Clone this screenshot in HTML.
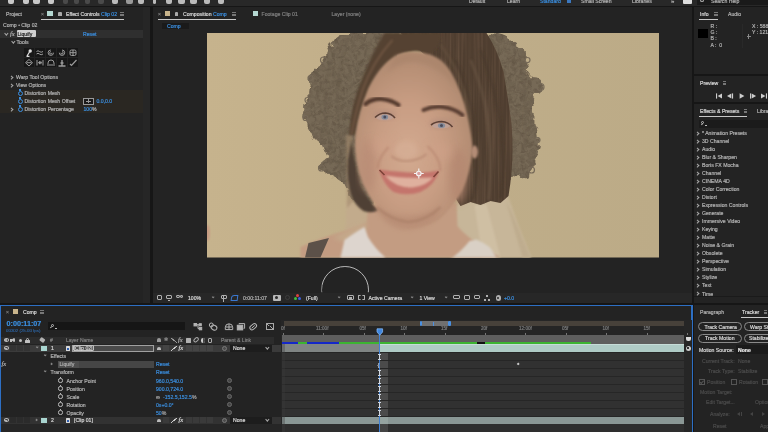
<!DOCTYPE html>
<html><head><meta charset="utf-8"><title>After Effects</title>
<style>
*{margin:0;padding:0;box-sizing:border-box}
html,body{width:768px;height:432px;overflow:hidden;background:#161616}
body{position:relative;font-family:"Liberation Sans",sans-serif;font-size:5.15px;color:#b4b4b4;-webkit-text-stroke:.18px currentColor;line-height:8px}
.a{position:absolute}
.t{position:absolute;white-space:nowrap;line-height:8px;height:8px}
.b{color:#3b8fe0}
.w{color:#dadada}
.d{color:#777}
.d2{color:#808080}
#r{position:absolute;left:0;top:0;width:768px;height:432px;will-change:transform}
</style></head><body><div id="r">
<div class="a" style="left:0px;top:0px;width:768px;height:5.5px;background:#282828;"></div>
<div class="a" style="left:8px;top:0px;width:6px;height:3.5px;background:#c8c8c8;border-radius:0 0 2px 2px;filter:blur(.5px)"></div>
<div class="a" style="left:23px;top:0px;width:6px;height:3.5px;background:#c8c8c8;border-radius:0 0 2px 2px;filter:blur(.5px)"></div>
<div class="a" style="left:33px;top:0px;width:7px;height:3.5px;background:#c8c8c8;border-radius:0 0 2px 2px;filter:blur(.5px)"></div>
<div class="a" style="left:48px;top:0px;width:6px;height:3.5px;background:#c8c8c8;border-radius:0 0 2px 2px;filter:blur(.5px)"></div>
<div class="a" style="left:63px;top:0px;width:5px;height:3.5px;background:#4a4a4a;border-radius:0 0 2px 2px;filter:blur(.5px)"></div>
<div class="a" style="left:74px;top:0px;width:5px;height:3.5px;background:#4a4a4a;border-radius:0 0 2px 2px;filter:blur(.5px)"></div>
<div class="a" style="left:85px;top:0px;width:5px;height:3.5px;background:#4a4a4a;border-radius:0 0 2px 2px;filter:blur(.5px)"></div>
<div class="a" style="left:98px;top:0px;width:6px;height:3.5px;background:#4a4a4a;border-radius:0 0 2px 2px;filter:blur(.5px)"></div>
<div class="a" style="left:112px;top:0px;width:6px;height:3.5px;background:#bbb;border-radius:0 0 2px 2px;filter:blur(.5px)"></div>
<div class="a" style="left:126px;top:0px;width:7px;height:3.5px;background:#999;border-radius:0 0 2px 2px;filter:blur(.5px)"></div>
<div class="a" style="left:138px;top:0px;width:6px;height:3.5px;background:#bbb;border-radius:0 0 2px 2px;filter:blur(.5px)"></div>
<div class="a" style="left:153px;top:0px;width:3px;height:3.5px;background:#bbb;border-radius:0 0 2px 2px;filter:blur(.5px)"></div>
<div class="a" style="left:166px;top:0px;width:6px;height:3.5px;background:#bbb;border-radius:0 0 2px 2px;filter:blur(.5px)"></div>
<div class="a" style="left:178px;top:0px;width:7px;height:3.5px;background:#bbb;border-radius:0 0 2px 2px;filter:blur(.5px)"></div>
<div class="a" style="left:190px;top:0px;width:7px;height:3.5px;background:#bbb;border-radius:0 0 2px 2px;filter:blur(.5px)"></div>
<div class="a" style="left:204px;top:0px;width:6px;height:3.5px;background:#bbb;border-radius:0 0 2px 2px;filter:blur(.5px)"></div>
<div class="a" style="left:218px;top:0px;width:6px;height:3.5px;background:#bbb;border-radius:0 0 2px 2px;filter:blur(.5px)"></div>
<div class="t " style="left:469px;top:-3px;font-size:5.15px;">Default</div>
<div class="t " style="left:507px;top:-3px;font-size:5.15px;">Learn</div>
<div class="t b" style="left:540px;top:-3px;font-size:5.15px;">Standard</div>
<div class="t " style="left:581px;top:-3px;font-size:5.15px;">Small Screen</div>
<div class="t " style="left:632px;top:-3px;font-size:5.15px;">Libraries</div>
<div class="a" style="left:567px;top:0px;width:4px;height:3px;background:#3b78c0;"></div>
<div class="t " style="left:671px;top:-3.5px;font-size:6px;">»</div>
<div class="a" style="left:683px;top:0px;width:9px;height:3.5px;background:#ddd;border-radius:0 0 1px 1px"></div>
<div class="a" style="left:697px;top:0px;width:71px;height:4.5px;background:#1a1a1a;"></div>
<div class="t " style="left:711px;top:-3px;font-size:5.15px;">Search Help</div>
<div class="a" style="left:700px;top:0px;width:4px;height:3px;background:transparent;border:1px solid #aaa;border-radius:50%;top:-1px"></div>
<div class="a" style="left:0px;top:7px;width:150px;height:296px;background:#232323;"></div>
<div class="t " style="left:6px;top:10px;">Project</div>
<div class="t d" style="left:41px;top:10px;font-size:5px;">×</div>
<div class="a" style="left:47px;top:11px;width:6px;height:5px;background:#b5d8d2;"></div>
<div class="a" style="left:58px;top:12px;width:3.5px;height:4px;background:#aaa;border-radius:1px 1px 0 0"></div>
<div class="t " style="left:66px;top:10px;font-size:5.15px;"><span class="w">Effect Controls</span> <span class="b">Clip 02</span></div>
<div class="a" style="left:120px;top:12.0px;width:3.5px;height:0.8px;background:#777;"></div>
<div class="a" style="left:120px;top:13.5px;width:3.5px;height:0.8px;background:#777;"></div>
<div class="a" style="left:120px;top:15.0px;width:3.5px;height:0.8px;background:#777;"></div>
<div class="a" style="left:41px;top:18.7px;width:83px;height:1px;background:#c8c8c8;"></div>
<div class="t " style="left:3px;top:21px;">Comp • Clip 02</div>
<div class="a" style="left:0px;top:30px;width:143px;height:7.5px;background:#2f2f2f;"></div>
<div class="a" style="left:4.65px;top:31.705px;width:2.7px;height:2.7px;border-right:1px solid #a8a8a8;border-bottom:1px solid #a8a8a8;transform:rotate(45deg)"></div>
<div class="t " style="left:10px;top:30px;font-size:6.5px;"><i style="font-family:'Liberation Serif',serif">fx</i></div>
<div class="a" style="left:16.5px;top:30.3px;width:19.5px;height:7px;background:#d0d0d0;border-radius:1px"></div>
<div class="t " style="left:17.5px;top:30px;font-size:5.15px;color:#1a1a1a">Liquify</div>
<div class="t b" style="left:83px;top:30px;">Reset</div>
<div class="a" style="left:12.15px;top:39.705px;width:2.7px;height:2.7px;border-right:1px solid #a8a8a8;border-bottom:1px solid #a8a8a8;transform:rotate(45deg)"></div>
<div class="t " style="left:16.5px;top:38px;">Tools</div>
<div class="a" style="left:24px;top:47.5px;width:10px;height:9.5px;background:#171717;"></div>
<svg class="a" style="left:24px;top:47.5px;filter:blur(.25px)" width="10" height="9.5" viewBox="0 0 10 9.5" fill="none" stroke="#e0e0e0" stroke-width="1"><circle cx="6.2" cy="3" r="1.7" fill="#ddd" stroke="none"/><path d="M5.5 4 L3 8 M2.5 8.3 H5.5" stroke="#ddd" stroke-width="1.3"/></svg>
<div class="a" style="left:35px;top:47.5px;width:10px;height:9.5px;background:#171717;"></div>
<svg class="a" style="left:35px;top:47.5px;filter:blur(.25px)" width="10" height="9.5" viewBox="0 0 10 9.5" fill="none" stroke="#9c9c9c" stroke-width="1"><path d="M1.5 3.5 Q3 2 4.5 3.5 T8 3.5 M1.5 6 Q3 4.5 4.5 6 T8 6"/></svg>
<div class="a" style="left:46px;top:47.5px;width:10px;height:9.5px;background:#171717;"></div>
<svg class="a" style="left:46px;top:47.5px;filter:blur(.25px)" width="10" height="9.5" viewBox="0 0 10 9.5" fill="none" stroke="#9c9c9c" stroke-width="1"><path d="M7.5 4.7 A2.7 2.7 0 1 1 4.8 2 M4.8 3.6 A1.2 1.2 0 1 0 6 4.8"/></svg>
<div class="a" style="left:57px;top:47.5px;width:10px;height:9.5px;background:#171717;"></div>
<svg class="a" style="left:57px;top:47.5px;filter:blur(.25px)" width="10" height="9.5" viewBox="0 0 10 9.5" fill="none" stroke="#9c9c9c" stroke-width="1"><path d="M2.3 4.7 A2.7 2.7 0 1 0 5 2 M5 3.6 A1.2 1.2 0 1 1 3.8 4.8"/></svg>
<div class="a" style="left:68px;top:47.5px;width:10px;height:9.5px;background:#171717;"></div>
<svg class="a" style="left:68px;top:47.5px;filter:blur(.25px)" width="10" height="9.5" viewBox="0 0 10 9.5" fill="none" stroke="#9c9c9c" stroke-width="1"><rect x="2" y="2" width="6" height="5.5" rx="1.5"/><path d="M5 2 V7.5 M2 4.7 H8"/></svg>
<div class="a" style="left:24px;top:57.5px;width:10px;height:9.5px;background:#171717;"></div>
<svg class="a" style="left:24px;top:57.5px;filter:blur(.25px)" width="10" height="9.5" viewBox="0 0 10 9.5" fill="none" stroke="#9c9c9c" stroke-width="1"><path d="M5 1.5 L8.5 4.7 L5 8 L1.5 4.7 Z M2.5 4.7 H7.5"/></svg>
<div class="a" style="left:35px;top:57.5px;width:10px;height:9.5px;background:#171717;"></div>
<svg class="a" style="left:35px;top:57.5px;filter:blur(.25px)" width="10" height="9.5" viewBox="0 0 10 9.5" fill="none" stroke="#9c9c9c" stroke-width="1"><path d="M2 2 V7.5 M8 2 V7.5 M3 4.7 H7 M4.5 3.2 V6.2 M5.8 3.2 V6.2"/></svg>
<div class="a" style="left:46px;top:57.5px;width:10px;height:9.5px;background:#171717;"></div>
<svg class="a" style="left:46px;top:57.5px;filter:blur(.25px)" width="10" height="9.5" viewBox="0 0 10 9.5" fill="none" stroke="#9c9c9c" stroke-width="1"><path d="M2 8 V5 A3 3 0 0 1 8 5 V8 M4 8 V6 M6 8 V6"/></svg>
<div class="a" style="left:57px;top:57.5px;width:10px;height:9.5px;background:#171717;"></div>
<svg class="a" style="left:57px;top:57.5px;filter:blur(.25px)" width="10" height="9.5" viewBox="0 0 10 9.5" fill="none" stroke="#9c9c9c" stroke-width="1"><path d="M1.5 8 H8.5 M5 7.5 V5 M3.5 5 H6.5 M5 4.5 V2" stroke-width="1.4"/></svg>
<div class="a" style="left:68px;top:57.5px;width:10px;height:9.5px;background:#171717;"></div>
<svg class="a" style="left:68px;top:57.5px;filter:blur(.25px)" width="10" height="9.5" viewBox="0 0 10 9.5" fill="none" stroke="#9c9c9c" stroke-width="1"><path d="M2 6 L3.5 7.5 L8.5 2" stroke-width="1.2"/></svg>
<div class="a" style="left:10.205px;top:75.65px;width:2.7px;height:2.7px;border-right:1px solid #a8a8a8;border-top:1px solid #a8a8a8;transform:rotate(45deg)"></div>
<div class="t " style="left:16px;top:73px;">Warp Tool Options</div>
<div class="a" style="left:10.205px;top:83.65px;width:2.7px;height:2.7px;border-right:1px solid #a8a8a8;border-top:1px solid #a8a8a8;transform:rotate(45deg)"></div>
<div class="t " style="left:16px;top:81px;">View Options</div>
<div class="a" style="left:0px;top:89.5px;width:143px;height:23.5px;background:#2a2722;"></div>
<div class="a" style="left:17.5px;top:90.60000000000001px;width:5px;height:5px;border-radius:50%;border:1px solid #3b8fe0"></div>
<div class="a" style="left:19.3px;top:89.4px;width:1.5px;height:1.2px;background:#3b8fe0;"></div>
<div class="t " style="left:24.5px;top:89.2px;">Distortion Mesh</div>
<div class="a" style="left:17.5px;top:98.60000000000001px;width:5px;height:5px;border-radius:50%;border:1px solid #3b8fe0"></div>
<div class="a" style="left:19.3px;top:97.4px;width:1.5px;height:1.2px;background:#3b8fe0;"></div>
<div class="t " style="left:24.5px;top:97.2px;">Distortion Mesh Offset</div>
<div class="a" style="left:17.5px;top:106.60000000000001px;width:5px;height:5px;border-radius:50%;border:1px solid #3b8fe0"></div>
<div class="a" style="left:19.3px;top:105.4px;width:1.5px;height:1.2px;background:#3b8fe0;"></div>
<div class="t " style="left:24.5px;top:105.2px;">Distortion Percentage</div>
<div class="a" style="left:10.205px;top:107.85000000000001px;width:2.7px;height:2.7px;border-right:1px solid #a8a8a8;border-top:1px solid #a8a8a8;transform:rotate(45deg)"></div>
<div class="a" style="left:83px;top:97.5px;width:10.5px;height:7px;background:#1a1a1a;border:1px solid #999"></div>
<div class="a" style="left:86px;top:100.7px;width:4.5px;height:0.7px;background:#999;"></div>
<div class="a" style="left:87.9px;top:99px;width:0.7px;height:4px;background:#999;"></div>
<div class="t b" style="left:96.5px;top:97.2px;">0.0,0.0</div>
<div class="t " style="left:83.5px;top:105.2px;"><span class="b">100</span>%</div>
<div class="a" style="left:143px;top:7px;width:7px;height:296px;background:#262626;"></div>
<div class="a" style="left:153px;top:7px;width:539px;height:296px;background:#232323;"></div>
<div class="a" style="left:153px;top:292.5px;width:539px;height:10.5px;background:#272727;"></div>
<div class="t d" style="left:158px;top:10px;font-size:5px;">×</div>
<div class="a" style="left:165px;top:11.2px;width:5px;height:4.8px;background:#c9b58c;"></div>
<div class="a" style="left:174.5px;top:12px;width:3.5px;height:4px;background:#aaa;border-radius:1px 1px 0 0"></div>
<div class="t " style="left:183px;top:10px;font-size:5.15px;"><span class="w">Composition</span> <span class="b">Comp</span></div>
<div class="a" style="left:232px;top:12.0px;width:3.5px;height:0.8px;background:#777;"></div>
<div class="a" style="left:232px;top:13.5px;width:3.5px;height:0.8px;background:#777;"></div>
<div class="a" style="left:232px;top:15.0px;width:3.5px;height:0.8px;background:#777;"></div>
<div class="a" style="left:157.5px;top:19px;width:78px;height:1px;background:#c8c8c8;"></div>
<div class="a" style="left:252.5px;top:11.2px;width:5px;height:4.8px;background:#b5d8d2;"></div>
<div class="t d2" style="left:261.5px;top:10px;">Footage Clip 01</div>
<div class="t d2" style="left:331.5px;top:10px;">Layer (none)</div>
<div class="a" style="left:162px;top:22.5px;width:27px;height:6.5px;background:#1a1a1a;"></div>
<div class="t b" style="left:167px;top:21.8px;">Comp</div>
<svg class="a" style="left:206.5px;top:33px" width="452.3" height="224.5" viewBox="206.5 33 452.3 224.5">
<defs>
<filter id="b05" x="-20%" y="-20%" width="140%" height="140%"><feGaussianBlur stdDeviation="0.6"/></filter>
<filter id="b1" x="-20%" y="-20%" width="140%" height="140%"><feGaussianBlur stdDeviation="1.1"/></filter>
<filter id="b2" x="-20%" y="-20%" width="140%" height="140%"><feGaussianBlur stdDeviation="2.2"/></filter>
<filter id="b4" x="-30%" y="-30%" width="160%" height="160%"><feGaussianBlur stdDeviation="4.5"/></filter>
<filter id="b8" x="-40%" y="-40%" width="180%" height="180%"><feGaussianBlur stdDeviation="9"/></filter>
<filter id="curl" color-interpolation-filters="sRGB" x="-10%" y="-10%" width="120%" height="120%"><feTurbulence type="fractalNoise" baseFrequency="0.13" numOctaves="2" seed="3" result="n"/><feDisplacementMap in="SourceGraphic" in2="n" scale="9" xChannelSelector="R" yChannelSelector="G"/><feGaussianBlur stdDeviation="0.55"/></filter>
<filter id="strand" color-interpolation-filters="sRGB" x="-5%" y="-5%" width="110%" height="110%"><feTurbulence type="fractalNoise" baseFrequency="0.45 0.012" numOctaves="2" seed="5" result="n"/><feColorMatrix in="n" type="matrix" values="0 0 0 0 0.43  0 0 0 0 0.34  0 0 0 0 0.27  1.3 0 0 0 -0.5" result="lt"/><feComposite in="lt" in2="SourceGraphic" operator="in" result="l2"/><feMerge><feMergeNode in="SourceGraphic"/><feMergeNode in="l2"/></feMerge><feGaussianBlur stdDeviation="0.7"/></filter>
<filter id="mott" color-interpolation-filters="sRGB" x="-5%" y="-5%" width="110%" height="110%"><feTurbulence type="fractalNoise" baseFrequency="0.25" numOctaves="2" seed="8" result="n"/><feColorMatrix in="n" type="matrix" values="0 0 0 0 0.35  0 0 0 0 0.3  0 0 0 0 0.24  1.3 0 0 0 -0.47" result="dk"/><feComposite in="dk" in2="SourceGraphic" operator="in" result="d2"/><feMerge><feMergeNode in="SourceGraphic"/><feMergeNode in="d2"/></feMerge></filter>
<linearGradient id="bg" x1="0" x2="1" y1="0" y2="0"><stop offset="0" stop-color="#c6b38d"/><stop offset="0.3" stop-color="#c2af8a"/><stop offset="0.6" stop-color="#bfad89"/><stop offset="1" stop-color="#bcab87"/></linearGradient>
<radialGradient id="skin" cx="0.46" cy="0.58" r="0.58"><stop offset="0" stop-color="#d3aa90"/><stop offset="0.5" stop-color="#c89d83"/><stop offset="1" stop-color="#b08a70"/></radialGradient>
</defs>
<rect x="206.5" y="33" width="452.3" height="224.5" fill="url(#bg)"/>
<!-- curly hair ghost -->
<g filter="url(#curl)"><g filter="url(#mott)" fill="#766956">
<path d="M339 33 Q333 40 329 47 Q325 52 326 56 Q321 57 322 62 Q324 66 319 66 Q314 69 311 73 Q307 78 311 82 Q308 90 309 96 Q303 103 305 110 Q302 117 306 122 Q305 129 311 132 Q313 140 321 144 Q324 152 327 158 Q316 164 319 170 Q324 176 331 176 Q338 179 343 183 Q347 192 351 198 Q355 206 362 210 L372 206 L380 150 L400 33 Z"/>
<path d="M485 33 Q498 34 506 38 Q513 41 517 46 Q524 50 526 56 Q529 62 524 68 Q527 74 531 78 Q540 78 543 85 Q542 92 536 94 Q531 97 533 104 Q531 112 534 118 Q533 126 537 132 Q540 142 537 150 Q536 158 532 164 Q534 172 528 176 Q522 179 518 175 Q512 176 508 182 L500 190 L490 120 Z"/>
</g></g>
<!-- curl details -->
<g fill="none" stroke="#776a58" stroke-width="1.2" filter="url(#b05)">
<circle cx="323" cy="60" r="3"/><circle cx="310" cy="78" r="2.5"/><circle cx="305" cy="118" r="2.5"/><circle cx="321" cy="168" r="3"/><circle cx="540" cy="87" r="3.5"/><circle cx="527" cy="60" r="2.5"/><circle cx="531" cy="170" r="3"/><circle cx="537" cy="140" r="2.5"/><circle cx="307" cy="100" r="2.5"/>
</g>
<g filter="url(#b1)" stroke="#665a4a" stroke-width="2" fill="none" opacity=".5">
<path d="M330 60 Q322 90 326 125 Q330 150 340 170"/><path d="M345 45 Q333 80 338 120"/><path d="M520 60 Q528 100 524 150"/>
</g>
<!-- translucent strands right -->
<path filter="url(#b1)" d="M456 203 L506 192 Q517 225 531 257.5 L450 257.5 Z" fill="#c7b699"/>
<path filter="url(#b1)" d="M474 205 L486 204 L500 257.5 L482 257.5 Z" fill="#d3c3a8" opacity=".7"/>
<path filter="url(#b1)" d="M505 200 L511 212 L530 257.5 L522 257.5 Z" fill="#bba98a" opacity=".7"/>
<!-- translucent strands left -->
<path filter="url(#b1)" d="M346 200 L372 205 L372 226 L345 236 Z" fill="#c2ab8c"/>
<path filter="url(#b1)" d="M345.5 135 L352 135 L354 200 L346.5 208 Z" fill="#a48b6e" opacity=".6"/>
<!-- shoulders / skin -->
<path filter="url(#b1)" d="M300 257.5 L300 247 Q320 238 347 230 Q358 226 366 222 L368 205 L456 203 L457 226 Q468 240 500 257.5 Z" fill="#c39c82"/>
<path filter="url(#b2)" d="M332 238 L366 220 L366 230 L344 242 Z" fill="#c4ab8c" opacity=".8"/>
<!-- white top -->
<path filter="url(#b1)" d="M340 257.5 L344 240 Q355 232 364 227 L367.5 237 Q374 248 385 257.5 Z" fill="#ddd5ce"/>
<path filter="url(#b1)" d="M452 257.5 Q462 250 469 241 L476 239.5 Q484 243 489 247 Q493 252 496 257.5 Z" fill="#d9d0c5"/>
<path filter="url(#b05)" d="M304.5 257.5 L308 243 L328.5 238 L320 257.5 Z" fill="#5b5149"/>
<!-- dark hair left lower -->
<path filter="url(#b1)" d="M351 140 Q354 165 360 185 Q368 202 378 210 Q372 214 363 211 Q355 206 351 196 Q346 180 347.5 160 Z" fill="#4f4134"/>
<!-- straight hair right -->
<path filter="url(#strand)" d="M400 33 L486 33 Q497 50 503 72 Q508 100 511 125 Q514 160 508 196 L500 203 L490 201 L480 205 L470 202 L460 206 L455 198 Q462 170 462 140 Q460 90 430 60 Z" fill="#4f3e30"/>
<g filter="url(#b1)" fill="none" opacity=".55">
<path d="M470 60 Q488 100 490 150 Q491 180 488 200" stroke="#6a5644" stroke-width="3"/>
<path d="M480 50 Q500 100 502 150 Q503 180 500 198" stroke="#47382c" stroke-width="3"/>
<path d="M455 60 Q474 100 476 150 Q477 180 472 200" stroke="#47382c" stroke-width="3"/>
<path d="M440 45 Q468 80 470 140" stroke="#66523f" stroke-width="2.5"/>
</g>
<!-- hair top & left band -->
<path filter="url(#b1)" d="M384 33 L440 33 Q440 50 428 54 Q418 50 410 52 Q396 54 388 62 Q372 80 363 104 Q357 122 355 135 L348.5 135 Q350 105 362 78 Q372 52 384 33 Z" fill="#554232"/>
<path filter="url(#b1)" d="M392 40 Q372 62 362 90 Q354 115 351 135" stroke="#86664f" stroke-width="2.5" fill="none" opacity=".45"/>
<!-- face -->
<path filter="url(#b1)" d="M412 52 Q438 52 450 72 Q462 92 467 116 Q472 140 472 150 Q470 172 462 190 Q452 208 438 220 Q424 228 408 228 Q392 226 379 211 Q366 196 358.5 172 Q353 150 355 135 Q358 112 368 88 Q380 64 395 56 Q403 52 412 52 Z" fill="url(#skin)"/>
<!-- neck under chin shadow -->
<path filter="url(#b2)" d="M374 206 Q403 226 440 207 Q436 228 405 230 Q384 228 374 206 Z" fill="#b98e76" opacity=".8"/>
<ellipse filter="url(#b1)" cx="474" cy="152" rx="3.5" ry="6.5" fill="#b38c76"/>
<!-- forehead shade near hair -->
<path filter="url(#b2)" d="M395 56 Q412 50 440 60 Q452 72 458 90 Q440 66 415 62 Q398 62 385 74 Z" fill="#a8836b" opacity=".6"/>
<path filter="url(#b1)" d="M376 207 Q392 221 408 222 Q426 221 440 207" stroke="#a67b64" stroke-width="2.5" fill="none" opacity=".55"/>
<!-- cheek shading -->
<ellipse filter="url(#b4)" cx="368" cy="165" rx="8" ry="26" fill="#b88a74" opacity=".7"/>
<ellipse filter="url(#b4)" cx="458" cy="175" rx="9" ry="28" fill="#b48670" opacity=".75"/>
<ellipse filter="url(#b4)" cx="383" cy="146" rx="12" ry="9" fill="#cfa088" opacity=".5"/>
<ellipse filter="url(#b4)" cx="440" cy="152" rx="12" ry="9" fill="#cfa088" opacity=".5"/>
<!-- brows -->
<path filter="url(#b1)" d="M365 104 Q372 98.5 381 99 Q391 100 398 105" stroke="#553a2d" stroke-width="4.2" fill="none" stroke-linecap="round"/>
<path filter="url(#b1)" d="M423 110 Q432 106 442 107 Q454 108.5 462 115" stroke="#593d30" stroke-width="4" fill="none" stroke-linecap="round"/>
<!-- eyes -->
<ellipse filter="url(#b2)" cx="384" cy="115" rx="12" ry="5" fill="#b58e7c" opacity=".7"/>
<ellipse filter="url(#b2)" cx="441" cy="123.5" rx="12" ry="5" fill="#b58e7c" opacity=".7"/>
<ellipse filter="url(#b05)" cx="384" cy="117.3" rx="8.5" ry="3" fill="#bfa094"/>
<ellipse filter="url(#b05)" cx="384.3" cy="117" rx="3.4" ry="2.6" fill="#868c9a"/>
<ellipse filter="url(#b05)" cx="384.3" cy="117" rx="1.5" ry="1.5" fill="#4a4c5c"/>
<path filter="url(#b05)" d="M374.5 117.5 Q379 113 385 113 Q391 113.5 394.5 118" stroke="#5c4036" stroke-width="1.6" fill="none"/>
<ellipse filter="url(#b05)" cx="440.5" cy="125.8" rx="9" ry="2.8" fill="#bfa094"/>
<ellipse filter="url(#b05)" cx="441" cy="125.5" rx="3.6" ry="2.5" fill="#868c9a"/>
<ellipse filter="url(#b05)" cx="441" cy="125.5" rx="1.5" ry="1.5" fill="#4a4c5c"/>
<path filter="url(#b05)" d="M430.5 125 Q435 121.5 441 121.5 Q448 122 452 127" stroke="#5c4036" stroke-width="1.6" fill="none"/>
<!-- nose -->
<ellipse filter="url(#b2)" cx="405.5" cy="150" rx="11" ry="9" fill="#d5ae95" opacity=".8"/>
<path filter="url(#b1)" d="M391 156 Q396 161 406 161 Q418 161 426 154" stroke="#b5866f" stroke-width="1.8" fill="none" opacity=".7"/>
<!-- smile lines -->
<path filter="url(#b1)" d="M388 147 Q378 158 377 168" stroke="#b78670" stroke-width="2" fill="none" opacity=".7"/>
<path filter="url(#b1)" d="M427 146 Q440 158 440 171" stroke="#b78670" stroke-width="2" fill="none" opacity=".7"/>
<!-- mouth -->
<path filter="url(#b1)" d="M378.5 169.5 Q390 171 403 172 Q420 174 438.5 170.5 Q435 185 420 192 Q406 196.5 393 192 Q383 185 378.5 169.5 Z" fill="#c4746c"/>
<path filter="url(#b1)" d="M384.5 175.5 Q405 179 432.5 177.5 Q426 186 412 187.5 Q395 188 384.5 175.5 Z" fill="#dfb09e"/>
<path filter="url(#b05)" d="M379 170 L384 175 M438 171.5 L433 177" stroke="#7d4238" stroke-width="1.6" fill="none"/>
<!-- crosshair -->
<g filter="url(#b05)"><circle cx="418.3" cy="173.5" r="2.3" fill="#d9a0a0" stroke="#f4f4f4" stroke-width="1.1"/><path d="M418.3 168.6 V171 M418.3 176 V178.6 M413.5 173.5 H416 M420.6 173.5 H423.2" stroke="#f4f4f4" stroke-width="1.1"/></g>
<!-- left hand hint -->
<ellipse filter="url(#b1)" cx="207" cy="233" rx="2.2" ry="8" fill="#c79a82"/>
</svg>

<div class="a" style="left:321.4px;top:265.8px;width:47.8px;height:47.8px;border-radius:50%;border:1px solid #b8b8b8;clip-path:inset(0 0 21.4px 0)"></div>
<div class="a" style="left:156.5px;top:294.5px;width:5.5px;height:5.5px;background:transparent;border:1px solid #b0b0b0;border-radius:1px;"></div>
<div class="a" style="left:166px;top:294.5px;width:6px;height:4.5px;background:transparent;border:1px solid #b0b0b0;border-radius:1px;"></div>
<div class="a" style="left:168px;top:299.5px;width:2px;height:1px;background:#b0b0b0;"></div>
<div class="a" style="left:176px;top:294.5px;width:3.8px;height:3.5px;background:transparent;border:1px solid #b0b0b0;border-radius:1px;border-radius:40%"></div>
<div class="a" style="left:179.5px;top:294.5px;width:3.8px;height:3.5px;background:transparent;border:1px solid #b0b0b0;border-radius:1px;border-radius:40%"></div>
<div class="t w" style="left:188px;top:294px;font-size:5.15px;">100%</div>
<div class="a" style="left:212.35px;top:296.045px;width:2.3px;height:2.3px;border-right:0.9px solid #858585;border-bottom:0.9px solid #858585;transform:rotate(45deg)"></div>
<div class="a" style="left:220.5px;top:294.5px;width:6px;height:4.5px;background:transparent;border:1px solid #b0b0b0;border-radius:1px;"></div>
<div class="a" style="left:223px;top:294.5px;width:0.8px;height:7px;background:#b0b0b0;"></div>
<div class="a" style="left:230.5px;top:294.5px;width:6.5px;height:5.5px;background:transparent;border:1px solid #3b78d0;border-radius:1px;border-radius:3px 0 0 0;transform:skewX(-8deg)"></div>
<div class="t " style="left:243px;top:294px;font-size:5.15px;">0:00:11:07</div>
<div class="a" style="left:273px;top:295px;width:7.5px;height:5.5px;background:#b8b8b8;border-radius:1px"></div>
<div class="a" style="left:275.3px;top:296.3px;width:3px;height:3px;background:#272727;border-radius:50%"></div>
<div class="a" style="left:284.5px;top:294.5px;width:5.5px;height:5.5px;background:transparent;border:1px solid #3c3c3c;border-radius:1px;border-radius:50%"></div>
<div class="a" style="left:296px;top:294px;width:3.2px;height:3.2px;background:#e04040;border-radius:50%"></div>
<div class="a" style="left:294.3px;top:297px;width:3.2px;height:3.2px;background:#40c040;border-radius:50%"></div>
<div class="a" style="left:297.7px;top:297px;width:3.2px;height:3.2px;background:#4060e0;border-radius:50%"></div>
<div class="t w" style="left:306px;top:294px;font-size:5.15px;">(Full)</div>
<div class="a" style="left:338.35px;top:296.045px;width:2.3px;height:2.3px;border-right:0.9px solid #858585;border-bottom:0.9px solid #858585;transform:rotate(45deg)"></div>
<div class="a" style="left:347px;top:294.5px;width:7px;height:5px;background:transparent;border:1px solid #b0b0b0;border-radius:1px;"></div>
<div class="a" style="left:349px;top:296.5px;width:3px;height:2px;background:#b0b0b0;"></div>
<div class="a" style="left:358px;top:294.5px;width:7px;height:5px;background:transparent;border:1px solid #b0b0b0;border-radius:1px;border-style:dashed"></div>
<div class="t w" style="left:368.5px;top:294px;font-size:5.15px;">Active Camera</div>
<div class="a" style="left:410.85px;top:296.045px;width:2.3px;height:2.3px;border-right:0.9px solid #858585;border-bottom:0.9px solid #858585;transform:rotate(45deg)"></div>
<div class="t w" style="left:419.5px;top:294px;font-size:5.15px;">1 View</div>
<div class="a" style="left:445.35px;top:296.045px;width:2.3px;height:2.3px;border-right:0.9px solid #858585;border-bottom:0.9px solid #858585;transform:rotate(45deg)"></div>
<div class="a" style="left:453px;top:294.5px;width:6.5px;height:4.5px;background:transparent;border:1px solid #b0b0b0;border-radius:1px;"></div>
<div class="a" style="left:463.5px;top:294.5px;width:6px;height:5px;background:transparent;border:1px solid #b0b0b0;border-radius:1px;"></div>
<div class="a" style="left:474px;top:294.5px;width:6px;height:4.5px;background:transparent;border:1px solid #b0b0b0;border-radius:1px;"></div>
<div class="a" style="left:485.5px;top:294.5px;width:2.5px;height:2.5px;background:#b0b0b0;"></div>
<div class="a" style="left:483.5px;top:298.5px;width:2.5px;height:2.5px;background:#b0b0b0;"></div>
<div class="a" style="left:487.5px;top:298.5px;width:2.5px;height:2.5px;background:#b0b0b0;"></div>
<div class="a" style="left:495.5px;top:295px;width:5.5px;height:5.5px;background:#b0b0b0;border-radius:50%"></div>
<div class="a" style="left:497.3px;top:296.8px;width:2px;height:2px;background:#272727;border-radius:50%"></div>
<div class="t b" style="left:504px;top:294px;font-size:5.15px;">+0.0</div>
<div class="a" style="left:694px;top:7px;width:74px;height:67px;background:#232323;"></div>
<div class="t w" style="left:700px;top:10px;font-size:5.15px;">Info</div>
<div class="a" style="left:714px;top:12.0px;width:3.5px;height:0.8px;background:#777;"></div>
<div class="a" style="left:714px;top:13.5px;width:3.5px;height:0.8px;background:#777;"></div>
<div class="a" style="left:714px;top:15.0px;width:3.5px;height:0.8px;background:#777;"></div>
<div class="a" style="left:699px;top:19px;width:18.5px;height:1px;background:#c8c8c8;"></div>
<div class="t " style="left:728px;top:10px;font-size:5.15px;">Audio</div>
<div class="a" style="left:698px;top:29px;width:9.5px;height:9px;background:#000;"></div>
<div class="t " style="left:710.5px;top:22px;font-size:5.15px;">R :</div>
<div class="t " style="left:710.5px;top:28px;font-size:5.15px;">G :</div>
<div class="t " style="left:710.5px;top:34.3px;font-size:5.15px;">B :</div>
<div class="t " style="left:710.5px;top:40.7px;font-size:5.15px;">A :&nbsp; 0</div>
<div class="t " style="left:752px;top:22px;font-size:5.15px;">X : 588</div>
<div class="t " style="left:752px;top:28px;font-size:5.15px;">Y : 121</div>
<div class="a" style="left:746.5px;top:36.2px;width:4.5px;height:0.7px;background:#888;"></div>
<div class="a" style="left:748.4px;top:34.3px;width:0.7px;height:4.5px;background:#888;"></div>
<div class="a" style="left:742px;top:24px;width:0.6px;height:24px;background:#292929;"></div>
<div class="a" style="left:694px;top:76px;width:74px;height:26px;background:#232323;"></div>
<div class="t w" style="left:700px;top:79px;font-size:5.15px;">Preview</div>
<div class="a" style="left:722.5px;top:81.0px;width:3.5px;height:0.8px;background:#777;"></div>
<div class="a" style="left:722.5px;top:82.5px;width:3.5px;height:0.8px;background:#777;"></div>
<div class="a" style="left:722.5px;top:84.0px;width:3.5px;height:0.8px;background:#777;"></div>
<svg class="a" style="left:714px;top:92px" width="54" height="8" viewBox="714 92 54 8" fill="#cdcdcd"><rect x="716" y="93.4" width="1.1" height="5.2"/><path d="M722 93.4 V98.6 L717.6 96 Z"/><path d="M731.4 93.4 V98.6 L727 96 Z"/><rect x="732" y="93.4" width="1.1" height="5.2"/><path d="M739.6 93.2 V98.8 L744.4 96 Z"/><rect x="750" y="93.4" width="1.1" height="5.2"/><path d="M751.7 93.4 V98.6 L756.1 96 Z"/><path d="M761 93.4 V98.6 L765.4 96 Z"/><rect x="765.9" y="93.4" width="1.1" height="5.2"/></svg>
<div class="a" style="left:694px;top:104px;width:74px;height:199px;background:#232323;"></div>
<div class="t w" style="left:700px;top:107px;font-size:5.15px;">Effects &amp; Presets</div>
<div class="a" style="left:743.5px;top:109.0px;width:3.5px;height:0.8px;background:#777;"></div>
<div class="a" style="left:743.5px;top:110.5px;width:3.5px;height:0.8px;background:#777;"></div>
<div class="a" style="left:743.5px;top:112.0px;width:3.5px;height:0.8px;background:#777;"></div>
<div class="a" style="left:699px;top:116.2px;width:48px;height:1px;background:#c8c8c8;"></div>
<div class="t " style="left:757px;top:107px;font-size:5.15px;">Libraries</div>
<div class="a" style="left:699px;top:119.5px;width:69px;height:8px;background:#1b1b1b;"></div>
<div class="a" style="left:701px;top:121px;width:3px;height:3px;background:transparent;border:.8px solid #bbb;border-radius:50%"></div>
<div class="a" style="left:700.5px;top:124.3px;width:1.5px;height:0.8px;background:#bbb;transform:rotate(-45deg)"></div>
<div class="a" style="left:705px;top:125px;width:1.5px;height:0.7px;background:#bbb;"></div>
<div class="a" style="left:696.0049999999999px;top:131.95000000000002px;width:2.7px;height:2.7px;border-right:1px solid #a8a8a8;border-top:1px solid #a8a8a8;transform:rotate(45deg)"></div>
<div class="t " style="left:702px;top:129.3px;font-size:5.15px;">* Animation Presets</div>
<div class="a" style="left:696.0049999999999px;top:139.96px;width:2.7px;height:2.7px;border-right:1px solid #a8a8a8;border-top:1px solid #a8a8a8;transform:rotate(45deg)"></div>
<div class="t " style="left:702px;top:137.31px;font-size:5.15px;">3D Channel</div>
<div class="a" style="left:696.0049999999999px;top:147.97000000000003px;width:2.7px;height:2.7px;border-right:1px solid #a8a8a8;border-top:1px solid #a8a8a8;transform:rotate(45deg)"></div>
<div class="t " style="left:702px;top:145.32000000000002px;font-size:5.15px;">Audio</div>
<div class="a" style="left:696.0049999999999px;top:155.98000000000002px;width:2.7px;height:2.7px;border-right:1px solid #a8a8a8;border-top:1px solid #a8a8a8;transform:rotate(45deg)"></div>
<div class="t " style="left:702px;top:153.33px;font-size:5.15px;">Blur &amp; Sharpen</div>
<div class="a" style="left:696.0049999999999px;top:163.99px;width:2.7px;height:2.7px;border-right:1px solid #a8a8a8;border-top:1px solid #a8a8a8;transform:rotate(45deg)"></div>
<div class="t " style="left:702px;top:161.34px;font-size:5.15px;">Boris FX Mocha</div>
<div class="a" style="left:696.0049999999999px;top:172.00000000000003px;width:2.7px;height:2.7px;border-right:1px solid #a8a8a8;border-top:1px solid #a8a8a8;transform:rotate(45deg)"></div>
<div class="t " style="left:702px;top:169.35000000000002px;font-size:5.15px;">Channel</div>
<div class="a" style="left:696.0049999999999px;top:180.01000000000002px;width:2.7px;height:2.7px;border-right:1px solid #a8a8a8;border-top:1px solid #a8a8a8;transform:rotate(45deg)"></div>
<div class="t " style="left:702px;top:177.36px;font-size:5.15px;">CINEMA 4D</div>
<div class="a" style="left:696.0049999999999px;top:188.02px;width:2.7px;height:2.7px;border-right:1px solid #a8a8a8;border-top:1px solid #a8a8a8;transform:rotate(45deg)"></div>
<div class="t " style="left:702px;top:185.37px;font-size:5.15px;">Color Correction</div>
<div class="a" style="left:696.0049999999999px;top:196.03px;width:2.7px;height:2.7px;border-right:1px solid #a8a8a8;border-top:1px solid #a8a8a8;transform:rotate(45deg)"></div>
<div class="t " style="left:702px;top:193.38px;font-size:5.15px;">Distort</div>
<div class="a" style="left:696.0049999999999px;top:204.04000000000002px;width:2.7px;height:2.7px;border-right:1px solid #a8a8a8;border-top:1px solid #a8a8a8;transform:rotate(45deg)"></div>
<div class="t " style="left:702px;top:201.39000000000001px;font-size:5.15px;">Expression Controls</div>
<div class="a" style="left:696.0049999999999px;top:212.05px;width:2.7px;height:2.7px;border-right:1px solid #a8a8a8;border-top:1px solid #a8a8a8;transform:rotate(45deg)"></div>
<div class="t " style="left:702px;top:209.4px;font-size:5.15px;">Generate</div>
<div class="a" style="left:696.0049999999999px;top:220.06000000000003px;width:2.7px;height:2.7px;border-right:1px solid #a8a8a8;border-top:1px solid #a8a8a8;transform:rotate(45deg)"></div>
<div class="t " style="left:702px;top:217.41000000000003px;font-size:5.15px;">Immersive Video</div>
<div class="a" style="left:696.0049999999999px;top:228.07000000000002px;width:2.7px;height:2.7px;border-right:1px solid #a8a8a8;border-top:1px solid #a8a8a8;transform:rotate(45deg)"></div>
<div class="t " style="left:702px;top:225.42000000000002px;font-size:5.15px;">Keying</div>
<div class="a" style="left:696.0049999999999px;top:236.08px;width:2.7px;height:2.7px;border-right:1px solid #a8a8a8;border-top:1px solid #a8a8a8;transform:rotate(45deg)"></div>
<div class="t " style="left:702px;top:233.43px;font-size:5.15px;">Matte</div>
<div class="a" style="left:696.0049999999999px;top:244.09px;width:2.7px;height:2.7px;border-right:1px solid #a8a8a8;border-top:1px solid #a8a8a8;transform:rotate(45deg)"></div>
<div class="t " style="left:702px;top:241.44px;font-size:5.15px;">Noise &amp; Grain</div>
<div class="a" style="left:696.0049999999999px;top:252.1px;width:2.7px;height:2.7px;border-right:1px solid #a8a8a8;border-top:1px solid #a8a8a8;transform:rotate(45deg)"></div>
<div class="t " style="left:702px;top:249.45px;font-size:5.15px;">Obsolete</div>
<div class="a" style="left:696.0049999999999px;top:260.11px;width:2.7px;height:2.7px;border-right:1px solid #a8a8a8;border-top:1px solid #a8a8a8;transform:rotate(45deg)"></div>
<div class="t " style="left:702px;top:257.46000000000004px;font-size:5.15px;">Perspective</div>
<div class="a" style="left:696.0049999999999px;top:268.12px;width:2.7px;height:2.7px;border-right:1px solid #a8a8a8;border-top:1px solid #a8a8a8;transform:rotate(45deg)"></div>
<div class="t " style="left:702px;top:265.47px;font-size:5.15px;">Simulation</div>
<div class="a" style="left:696.0049999999999px;top:276.13px;width:2.7px;height:2.7px;border-right:1px solid #a8a8a8;border-top:1px solid #a8a8a8;transform:rotate(45deg)"></div>
<div class="t " style="left:702px;top:273.48px;font-size:5.15px;">Stylize</div>
<div class="a" style="left:696.0049999999999px;top:284.14px;width:2.7px;height:2.7px;border-right:1px solid #a8a8a8;border-top:1px solid #a8a8a8;transform:rotate(45deg)"></div>
<div class="t " style="left:702px;top:281.49px;font-size:5.15px;">Text</div>
<div class="a" style="left:696.0049999999999px;top:292.15px;width:2.7px;height:2.7px;border-right:1px solid #a8a8a8;border-top:1px solid #a8a8a8;transform:rotate(45deg)"></div>
<div class="t " style="left:702px;top:289.5px;font-size:5.15px;">Time</div>
<div class="a" style="left:694px;top:296.3px;width:74px;height:0.7px;background:#1a1a1a;"></div>
<div class="a" style="left:694px;top:305px;width:74px;height:127px;background:#232323;"></div>
<div class="t " style="left:700px;top:308px;font-size:5.15px;">Paragraph</div>
<div class="t w" style="left:742px;top:308px;font-size:5.15px;">Tracker</div>
<div class="a" style="left:763.5px;top:310.0px;width:3.5px;height:0.8px;background:#777;"></div>
<div class="a" style="left:763.5px;top:311.5px;width:3.5px;height:0.8px;background:#777;"></div>
<div class="a" style="left:763.5px;top:313.0px;width:3.5px;height:0.8px;background:#777;"></div>
<div class="a" style="left:741px;top:316.5px;width:27px;height:1px;background:#c8c8c8;"></div>
<div class="a" style="left:698px;top:322px;width:44px;height:9px;border:1px solid #8a8a8a;border-radius:5px"></div>
<div class="t w" style="left:704.5px;top:322.5px;font-size:5.15px;">Track Camera</div>
<div class="a" style="left:744px;top:322px;width:40px;height:9px;border:1px solid #8a8a8a;border-radius:5px"></div>
<div class="t w" style="left:750px;top:322.5px;font-size:5.15px;">Warp Stabilizer</div>
<div class="a" style="left:698px;top:333.5px;width:44px;height:9px;border:1px solid #8a8a8a;border-radius:5px"></div>
<div class="t w" style="left:705px;top:334.0px;font-size:5.15px;">Track Motion</div>
<div class="a" style="left:744px;top:333.5px;width:40px;height:9px;border:1px solid #8a8a8a;border-radius:5px"></div>
<div class="t w" style="left:749px;top:334.0px;font-size:5.15px;">Stabilize Motion</div>
<div class="a" style="left:736px;top:345px;width:32px;height:9px;background:#1b1b1b;"></div>
<div class="t w" style="left:699px;top:345.6px;font-size:5.15px;">Motion Source:</div>
<div class="t w" style="left:738px;top:345.6px;font-size:5.15px;font-weight:bold;color:#eee">None</div>
<div class="t " style="left:702px;top:356.7px;font-size:5.15px;color:#4c4c4c">Current Track:</div>
<div class="t " style="left:738px;top:356.7px;font-size:5.15px;color:#4c4c4c">None</div>
<div class="t " style="left:708px;top:367.3px;font-size:5.15px;color:#4c4c4c">Track Type:</div>
<div class="t " style="left:738px;top:367.3px;font-size:5.15px;color:#4c4c4c">Stabilize</div>
<div class="a" style="left:699px;top:378.5px;width:6px;height:6px;background:transparent;border:1px solid #555"></div>
<div class="a" style="left:730.5px;top:378.5px;width:6px;height:6px;background:transparent;border:1px solid #555"></div>
<div class="a" style="left:762px;top:378.5px;width:6px;height:6px;background:transparent;border:1px solid #555"></div>
<div class="a" style="left:700.3px;top:380.5px;width:3.5px;height:2px;background:transparent;border-left:1px solid #555;border-bottom:1px solid #555;transform:rotate(-45deg)"></div>
<div class="t " style="left:707px;top:377.6px;font-size:5.15px;color:#4c4c4c">Position</div>
<div class="t " style="left:739px;top:377.6px;font-size:5.15px;color:#4c4c4c">Rotation</div>
<div class="t " style="left:700px;top:387.6px;font-size:5.15px;color:#4c4c4c">Motion Target:</div>
<div class="t " style="left:706px;top:398px;font-size:5.15px;color:#4c4c4c">Edit Target...</div>
<div class="t " style="left:755px;top:398px;font-size:5.15px;color:#4c4c4c">Options...</div>
<div class="t " style="left:710px;top:409.5px;font-size:5.15px;color:#4c4c4c">Analyze:</div>
<div class="a" style="left:737px;top:411.5px;border-right:3px solid #444;border-top:2px solid transparent;border-bottom:2px solid transparent"></div>
<div class="a" style="left:741px;top:411.5px;width:1px;height:4px;background:#444;"></div>
<div class="a" style="left:750px;top:411.5px;border-right:3px solid #444;border-top:2px solid transparent;border-bottom:2px solid transparent"></div>
<div class="a" style="left:762px;top:411.5px;border-left:3px solid #444;border-top:2px solid transparent;border-bottom:2px solid transparent"></div>
<div class="t " style="left:713px;top:421.7px;font-size:5.15px;color:#4c4c4c">Reset</div>
<div class="t " style="left:760px;top:421.7px;font-size:5.15px;color:#4c4c4c">Apply</div>
<div class="a" style="left:0px;top:304.8px;width:692.5px;height:127.2px;background:#2d6fc4;"></div>
<div class="a" style="left:1.3px;top:305.9px;width:690.2px;height:126.1px;background:#232323;"></div>
<div class="t d" style="left:6px;top:308px;font-size:5px;">×</div>
<div class="a" style="left:13px;top:309px;width:4.8px;height:4.8px;background:#c9b58c;"></div>
<div class="t w" style="left:23px;top:308px;font-size:5.15px;">Comp</div>
<div class="a" style="left:40px;top:310.0px;width:3.5px;height:0.8px;background:#777;"></div>
<div class="a" style="left:40px;top:311.5px;width:3.5px;height:0.8px;background:#777;"></div>
<div class="a" style="left:40px;top:313.0px;width:3.5px;height:0.8px;background:#777;"></div>
<div class="t b" style="left:6.5px;top:320.3px;font-size:7.2px;font-weight:bold">0:00:11:07</div>
<div class="t " style="left:6px;top:326.8px;font-size:4.4px;color:#2c5d95">00302 (25.00 fps)</div>
<div class="a" style="left:48px;top:322.3px;width:137px;height:7.7px;background:#161616;"></div>
<div class="a" style="left:51px;top:324px;width:3px;height:3px;background:transparent;border:.8px solid #bbb;border-radius:50%"></div>
<div class="a" style="left:50.3px;top:327.3px;width:1.5px;height:0.8px;background:#bbb;transform:rotate(-45deg)"></div>
<div class="a" style="left:55px;top:328px;width:1.5px;height:0.7px;background:#bbb;"></div>
<svg class="a" style="left:192px;top:321px;filter:blur(.25px)" width="70" height="11" viewBox="192 321 70 11" fill="none" stroke="#b4b4b4" stroke-width="1"><rect x="194" y="323.5" width="2.6" height="2.4" fill="#b4b4b4"/><path d="M196.6 324.7 H199.5 M198 324.7 V328.6 H199.5"/><rect x="199.3" y="327.4" width="2.4" height="2.4" fill="#b4b4b4"/><rect x="199.3" y="323.7" width="2" height="2" fill="#b4b4b4"/><circle cx="211.3" cy="325" r="2"/><ellipse cx="214" cy="327.6" rx="3" ry="2.3" transform="rotate(25 214 327.6)"/><path d="M225.3 329.6 V327.5 A3.7 3.7 0 0 1 232.7 327.5 V329.6 Z M229 324 V329.5 M225.5 327 H232.5"/><rect x="237.3" y="325.3" width="5.4" height="4.6" fill="#b4b4b4"/><path d="M239 324.3 V323.6 H244.6 V328.3 H243.6"/><rect x="249.5" y="324.7" width="7.4" height="4.2" rx="2.1" transform="rotate(-40 253.2 326.8)"/><path d="M251.6 328.3 L254.8 325.4"/></svg>
<div class="a" style="left:265.5px;top:323px;width:8.5px;height:7px;border:1px solid #a8a8a8;background:linear-gradient(to top right,transparent 46%,#a8a8a8 47%,#a8a8a8 55%,transparent 56%)"></div>
<div class="a" style="left:1.3px;top:336.5px;width:272.7px;height:7.3px;background:#2c2c2c;"></div>
<div class="a" style="left:3.5px;top:338.2px;width:5px;height:3.6px;border-radius:50%;border:.9px solid #c0c0c0"></div>
<div class="a" style="left:5.3px;top:339.3px;width:1.4px;height:1.4px;background:#c0c0c0;border-radius:50%"></div>
<div class="a" style="left:10px;top:338.5px;width:2px;height:3px;background:#c0c0c0;"></div>
<div class="a" style="left:10.5px;top:337.5px;border-right:3px solid #c0c0c0;border-top:2.5px solid transparent;border-bottom:2.5px solid transparent"></div>
<div class="a" style="left:12.5px;top:338px;width:2.5px;height:4px;border-right:.9px solid #c0c0c0;border-radius:50%"></div>
<div class="a" style="left:18.5px;top:338.5px;width:3.2px;height:3.2px;background:#c0c0c0;border-radius:50%"></div>
<div class="a" style="left:25px;top:339.8px;width:4.5px;height:3px;background:#c0c0c0;border-radius:.5px"></div>
<div class="a" style="left:25.8px;top:337.5px;width:3px;height:3px;border:.8px solid #c0c0c0;border-radius:2px 2px 0 0"></div>
<div class="a" style="left:39.5px;top:338px;width:5px;height:3.5px;background:#b0b0b0;border-radius:1px;transform:rotate(35deg)"></div>
<div class="t d2" style="left:50px;top:336px;font-size:5px;">#</div>
<div class="t d2" style="left:66px;top:336px;font-size:5px;">Layer Name</div>
<div class="a" style="left:157px;top:338px;width:4px;height:3.5px;background:#999;border-radius:50% 50% 0 0"></div>
<div class="t " style="left:163.5px;top:336px;font-size:4.5px;color:#888">✱</div>
<div class="a" style="left:170.5px;top:337.5px;width:6px;height:5px;background:linear-gradient(to top right,transparent 44%,#999 45%,#999 57%,transparent 58%)"></div>
<div class="t " style="left:178px;top:336px;font-size:6.5px;"><i style="font-family:'Liberation Serif',serif">fx</i></div>
<div class="a" style="left:185.5px;top:338px;width:5px;height:4.5px;background:#b0b0b0;border-radius:.5px"></div>
<div class="a" style="left:192.5px;top:338.2px;width:5.5px;height:3.5px;border:1px solid #aaa;border-radius:2px;transform:rotate(-40deg)"></div>
<div class="a" style="left:200.5px;top:338px;width:4.5px;height:4.5px;background:#ccc;border-radius:50%"></div>
<div class="a" style="left:202.7px;top:338px;width:2.3px;height:4.5px;background:#444;border-radius:0 3px 3px 0"></div>
<div class="a" style="left:207.5px;top:338px;width:4.5px;height:4.5px;border:.9px solid #aaa;border-radius:1px"></div>
<div class="t d2" style="left:221px;top:336px;font-size:5px;">Parent &amp; Link</div>
<div class="a" style="left:1.3px;top:344.5px;width:272.7px;height:7.4px;background:#3b3b3b;"></div>
<div class="a" style="left:3.5px;top:346.4px;width:5px;height:3.6px;border-radius:50%;border:.9px solid #c0c0c0"></div>
<div class="a" style="left:5.3px;top:347.5px;width:1.4px;height:1.4px;background:#c0c0c0;border-radius:50%"></div>
<div class="a" style="left:10px;top:345.0px;width:6px;height:6.4px;background:#333;"></div>
<div class="a" style="left:17px;top:345.0px;width:6px;height:6.4px;background:#333;"></div>
<div class="a" style="left:24px;top:345.0px;width:6px;height:6.4px;background:#333;"></div>
<div class="a" style="left:41px;top:345.5px;width:5.5px;height:5.5px;background:#a9d5d0;"></div>
<div class="t w" style="left:51px;top:344.3px;font-size:5.15px;">1</div>
<div class="a" style="left:66px;top:345.5px;width:3.6px;height:5.15px;background:#d8d8d8;border-radius:.5px"></div>
<div class="a" style="left:66.8px;top:347.5px;width:2px;height:2.4px;background:#3060b0;"></div>
<div class="a" style="left:157px;top:346.5px;width:4px;height:3.5px;background:#bbb;border-radius:50% 50% 0 0"></div>
<div class="a" style="left:163px;top:345.0px;width:6px;height:6.4px;background:#444;"></div>
<div class="a" style="left:186px;top:345.0px;width:6px;height:6.4px;background:#444;"></div>
<div class="a" style="left:193px;top:345.0px;width:6px;height:6.4px;background:#444;"></div>
<div class="a" style="left:200px;top:345.0px;width:6px;height:6.4px;background:#444;"></div>
<div class="a" style="left:207px;top:345.0px;width:6px;height:6.4px;background:#444;"></div>
<div class="a" style="left:171px;top:345.5px;width:6px;height:5.5px;background:linear-gradient(to top left,transparent 44%,#ccc 45%,#ccc 57%,transparent 58%)"></div>
<div class="t w" style="left:178.5px;top:344.2px;font-size:6.5px;"><i style="font-family:'Liberation Serif',serif">fx</i></div>
<div class="a" style="left:221.5px;top:345.5px;width:5.5px;height:5.5px;border:.8px solid #7a7a7a;background:#4c4c4c;border-radius:50%"></div>
<div class="a" style="left:229.5px;top:344.5px;width:42px;height:7.4px;background:#1d1d1d;"></div>
<div class="t w" style="left:233px;top:344.3px;font-size:5.15px;">None</div>
<div class="a" style="left:266.15px;top:345.905px;width:2.7px;height:2.7px;border-right:1px solid #aaa;border-bottom:1px solid #aaa;transform:rotate(45deg)"></div>
<div class="a" style="left:35.8px;top:346.16px;width:2.4px;height:2.4px;border-right:0.9px solid #8a8a8a;border-bottom:0.9px solid #8a8a8a;transform:rotate(45deg)"></div>
<div class="a" style="left:72px;top:344.7px;width:81.5px;height:7px;background:#4a4a4a;border:1px solid #a0a0a0"></div>
<div class="a" style="left:72.5px;top:345.2px;width:21.5px;height:6px;background:transparent;border:.8px solid #c0c0c0;border-radius:1px"></div>
<div class="t " style="left:73.7px;top:344.3px;font-size:5.15px;color:#d0d0d0">[Clip 02]</div>
<div class="a" style="left:44.3px;top:354.26000000000005px;width:2.4px;height:2.4px;border-right:0.9px solid #8a8a8a;border-bottom:0.9px solid #8a8a8a;transform:rotate(45deg)"></div>
<div class="t " style="left:50.5px;top:352.3px;">Effects</div>
<div class="t " style="left:1.5px;top:360.3px;font-size:6.5px;"><i style="font-family:'Liberation Serif',serif">fx</i></div>
<div class="a" style="left:57.5px;top:360.7px;width:96.5px;height:7px;background:#464646;"></div>
<div class="a" style="left:57.5px;top:360.7px;width:21px;height:7px;background:#4e4e4e;"></div>
<div class="a" style="left:50.459999999999994px;top:363.1px;width:2.4px;height:2.4px;border-right:0.9px solid #8a8a8a;border-top:0.9px solid #8a8a8a;transform:rotate(45deg)"></div>
<div class="t " style="left:59.5px;top:360.3px;font-size:5.15px;color:#b0b0b0">Liquify</div>
<div class="t b" style="left:156px;top:360.3px;font-size:5.15px;">Reset</div>
<div class="a" style="left:44.3px;top:370.26000000000005px;width:2.4px;height:2.4px;border-right:0.9px solid #8a8a8a;border-bottom:0.9px solid #8a8a8a;transform:rotate(45deg)"></div>
<div class="t " style="left:50.5px;top:368.3px;">Transform</div>
<div class="t b" style="left:156px;top:368.3px;font-size:5.15px;">Reset</div>
<div class="a" style="left:58px;top:378.2px;width:4.8px;height:4.8px;border-radius:45%;border:1px solid #b8b8b8"></div>
<div class="a" style="left:59.6px;top:377.0px;width:1.6px;height:1.2px;background:#b8b8b8;"></div>
<div class="t " style="left:66.5px;top:376.5px;">Anchor Point</div>
<div class="t b" style="left:156px;top:376.5px;font-size:5.15px;">960.0,540.0</div>
<div class="a" style="left:227px;top:377.9px;width:5px;height:5px;border:.8px solid #6a6a6a;background:#444;border-radius:50%"></div>
<div class="a" style="left:58px;top:386.2px;width:4.8px;height:4.8px;border-radius:45%;border:1px solid #b8b8b8"></div>
<div class="a" style="left:59.6px;top:385.0px;width:1.6px;height:1.2px;background:#b8b8b8;"></div>
<div class="t " style="left:66.5px;top:384.5px;">Position</div>
<div class="t b" style="left:156px;top:384.5px;font-size:5.15px;">900.0,724.0</div>
<div class="a" style="left:227px;top:385.9px;width:5px;height:5px;border:.8px solid #6a6a6a;background:#444;border-radius:50%"></div>
<div class="a" style="left:58px;top:394.2px;width:4.8px;height:4.8px;border-radius:45%;border:1px solid #b8b8b8"></div>
<div class="a" style="left:59.6px;top:393.0px;width:1.6px;height:1.2px;background:#b8b8b8;"></div>
<div class="t " style="left:66.5px;top:392.5px;">Scale</div>
<div class="t " style="left:156px;top:392.5px;font-size:5.5px;">∞</div>
<div class="t b" style="left:163px;top:392.5px;font-size:5.15px;">-152.5,152.5<span style="color:#a8a8a8">%</span></div>
<div class="a" style="left:227px;top:393.9px;width:5px;height:5px;border:.8px solid #6a6a6a;background:#444;border-radius:50%"></div>
<div class="a" style="left:58px;top:402.2px;width:4.8px;height:4.8px;border-radius:45%;border:1px solid #b8b8b8"></div>
<div class="a" style="left:59.6px;top:401.0px;width:1.6px;height:1.2px;background:#b8b8b8;"></div>
<div class="t " style="left:66.5px;top:400.5px;">Rotation</div>
<div class="t b" style="left:156px;top:400.5px;font-size:5.15px;">0x+0.0°</div>
<div class="a" style="left:227px;top:401.9px;width:5px;height:5px;border:.8px solid #6a6a6a;background:#444;border-radius:50%"></div>
<div class="a" style="left:58px;top:410.2px;width:4.8px;height:4.8px;border-radius:45%;border:1px solid #b8b8b8"></div>
<div class="a" style="left:59.6px;top:409.0px;width:1.6px;height:1.2px;background:#b8b8b8;"></div>
<div class="t " style="left:66.5px;top:408.5px;">Opacity</div>
<div class="t b" style="left:156px;top:408.5px;font-size:5.15px;">50<span style="color:#a8a8a8">%</span></div>
<div class="a" style="left:227px;top:409.9px;width:5px;height:5px;border:.8px solid #6a6a6a;background:#444;border-radius:50%"></div>
<div class="a" style="left:1.3px;top:416.5px;width:272.7px;height:7.4px;background:#323232;"></div>
<div class="a" style="left:3.5px;top:418.4px;width:5px;height:3.6px;border-radius:50%;border:.9px solid #c0c0c0"></div>
<div class="a" style="left:5.3px;top:419.5px;width:1.4px;height:1.4px;background:#c0c0c0;border-radius:50%"></div>
<div class="a" style="left:10px;top:417.0px;width:6px;height:6.4px;background:#2b2b2b;"></div>
<div class="a" style="left:17px;top:417.0px;width:6px;height:6.4px;background:#2b2b2b;"></div>
<div class="a" style="left:24px;top:417.0px;width:6px;height:6.4px;background:#2b2b2b;"></div>
<div class="a" style="left:41px;top:417.5px;width:5.5px;height:5.5px;background:#a9d5d0;"></div>
<div class="t w" style="left:51px;top:416.3px;font-size:5.15px;">2</div>
<div class="a" style="left:66px;top:417.5px;width:3.6px;height:5.15px;background:#d8d8d8;border-radius:.5px"></div>
<div class="a" style="left:66.8px;top:419.5px;width:2px;height:2.4px;background:#3060b0;"></div>
<div class="a" style="left:157px;top:418.5px;width:4px;height:3.5px;background:#bbb;border-radius:50% 50% 0 0"></div>
<div class="a" style="left:163px;top:417.0px;width:6px;height:6.4px;background:#3a3a3a;"></div>
<div class="a" style="left:186px;top:417.0px;width:6px;height:6.4px;background:#3a3a3a;"></div>
<div class="a" style="left:193px;top:417.0px;width:6px;height:6.4px;background:#3a3a3a;"></div>
<div class="a" style="left:200px;top:417.0px;width:6px;height:6.4px;background:#3a3a3a;"></div>
<div class="a" style="left:207px;top:417.0px;width:6px;height:6.4px;background:#3a3a3a;"></div>
<div class="a" style="left:171px;top:417.5px;width:6px;height:5.5px;background:linear-gradient(to top left,transparent 44%,#ccc 45%,#ccc 57%,transparent 58%)"></div>
<div class="t w" style="left:178.5px;top:416.2px;font-size:6.5px;"><i style="font-family:'Liberation Serif',serif">fx</i></div>
<div class="a" style="left:221.5px;top:417.5px;width:5.5px;height:5.5px;border:.8px solid #7a7a7a;background:#4c4c4c;border-radius:50%"></div>
<div class="a" style="left:229.5px;top:416.5px;width:42px;height:7.4px;background:#1d1d1d;"></div>
<div class="t w" style="left:233px;top:416.3px;font-size:5.15px;">None</div>
<div class="a" style="left:266.15px;top:417.905px;width:2.7px;height:2.7px;border-right:1px solid #aaa;border-bottom:1px solid #aaa;transform:rotate(45deg)"></div>
<div class="a" style="left:34.959999999999994px;top:419.0px;width:2.4px;height:2.4px;border-right:0.9px solid #8a8a8a;border-top:0.9px solid #8a8a8a;transform:rotate(45deg)"></div>
<div class="t w" style="left:74px;top:416.3px;font-size:5.15px;">[Clip 01]</div>
<div class="a" style="left:1.3px;top:424.2px;width:690.2px;height:7.8px;background:#262626;"></div>
<div class="a" style="left:281.0px;top:320px;width:410.5px;height:112px;background:#262626;"></div>
<div class="a" style="left:284px;top:321px;width:400px;height:5px;background:#47413a;"></div>
<div class="a" style="left:422px;top:321.3px;width:26px;height:4.5px;background:#707070;"></div>
<div class="a" style="left:419.5px;top:321px;width:2.5px;height:5px;background:#4a90e2;border-radius:1px"></div>
<div class="a" style="left:448px;top:321px;width:2.5px;height:5px;background:#4a90e2;border-radius:1px"></div>
<div class="a" style="left:433px;top:321.5px;width:0.8px;height:4px;background:#4a90e2;"></div>
<div class="a" style="left:281.5px;top:326px;width:402.5px;height:9px;background:#252525;"></div>
<div class="t " style="left:281px;top:325.3px;font-size:4.6px;color:#7e7e7e">0f</div>
<div class="t " style="left:316px;top:325.3px;font-size:4.6px;color:#7e7e7e">11:00f</div>
<div class="t " style="left:359.5px;top:325.3px;font-size:4.6px;color:#7e7e7e">05f</div>
<div class="t " style="left:400.5px;top:325.3px;font-size:4.6px;color:#7e7e7e">10f</div>
<div class="t " style="left:441px;top:325.3px;font-size:4.6px;color:#7e7e7e">15f</div>
<div class="t " style="left:481px;top:325.3px;font-size:4.6px;color:#7e7e7e">20f</div>
<div class="t " style="left:519px;top:325.3px;font-size:4.6px;color:#7e7e7e">12:00f</div>
<div class="t " style="left:562px;top:325.3px;font-size:4.6px;color:#7e7e7e">05f</div>
<div class="t " style="left:602.5px;top:325.3px;font-size:4.6px;color:#7e7e7e">10f</div>
<div class="t " style="left:643.5px;top:325.3px;font-size:4.6px;color:#7e7e7e">15f</div>
<div class="a" style="left:283.0px;top:333px;width:0.8px;height:2.2px;background:#777;"></div>
<div class="a" style="left:323.4px;top:333px;width:0.8px;height:2.2px;background:#777;"></div>
<div class="a" style="left:363.8px;top:333px;width:0.8px;height:2.2px;background:#777;"></div>
<div class="a" style="left:404.2px;top:333px;width:0.8px;height:2.2px;background:#777;"></div>
<div class="a" style="left:444.6px;top:333px;width:0.8px;height:2.2px;background:#777;"></div>
<div class="a" style="left:485.0px;top:333px;width:0.8px;height:2.2px;background:#777;"></div>
<div class="a" style="left:525.4px;top:333px;width:0.8px;height:2.2px;background:#777;"></div>
<div class="a" style="left:565.8px;top:333px;width:0.8px;height:2.2px;background:#777;"></div>
<div class="a" style="left:606.2px;top:333px;width:0.8px;height:2.2px;background:#777;"></div>
<div class="a" style="left:646.5999999999999px;top:333px;width:0.8px;height:2.2px;background:#777;"></div>
<div class="a" style="left:687.0px;top:333px;width:0.8px;height:2.2px;background:#777;"></div>
<div class="a" style="left:281.5px;top:335.2px;width:402.5px;height:7px;background:#5e5e5e;"></div>
<div class="a" style="left:281.5px;top:342.3px;width:402.5px;height:1.8px;background:#5e5e5e;"></div>
<div class="a" style="left:281.5px;top:342.3px;width:16.5px;height:1.7px;background:#1428c8;"></div>
<div class="a" style="left:298px;top:342.3px;width:8.5px;height:1.7px;background:#3cb432;"></div>
<div class="a" style="left:306.5px;top:342.3px;width:32.5px;height:1.7px;background:#1428c8;"></div>
<div class="a" style="left:339px;top:342.3px;width:137.5px;height:1.7px;background:#3cb432;"></div>
<div class="a" style="left:476.5px;top:342.3px;width:8.5px;height:1.7px;background:#111;"></div>
<div class="a" style="left:485px;top:342.3px;width:105.5px;height:1.7px;background:#3cb432;"></div>
<div class="a" style="left:281.5px;top:352.3px;width:402.5px;height:8px;background:#313131;"></div>
<div class="a" style="left:281.5px;top:352.3px;width:402.5px;height:0.9px;background:#262626;"></div>
<div class="a" style="left:379.5px;top:353.2px;width:8px;height:7.1px;background:#4b4b4b;"></div>
<div class="a" style="left:281.5px;top:360.3px;width:402.5px;height:8px;background:#313131;"></div>
<div class="a" style="left:281.5px;top:360.3px;width:402.5px;height:0.9px;background:#262626;"></div>
<div class="a" style="left:379.5px;top:361.2px;width:8px;height:7.1px;background:#4b4b4b;"></div>
<div class="a" style="left:281.5px;top:368.3px;width:402.5px;height:8px;background:#313131;"></div>
<div class="a" style="left:281.5px;top:368.3px;width:402.5px;height:0.9px;background:#262626;"></div>
<div class="a" style="left:379.5px;top:369.2px;width:8px;height:7.1px;background:#4b4b4b;"></div>
<div class="a" style="left:281.5px;top:376.3px;width:402.5px;height:8px;background:#313131;"></div>
<div class="a" style="left:281.5px;top:376.3px;width:402.5px;height:0.9px;background:#262626;"></div>
<div class="a" style="left:379.5px;top:377.2px;width:8px;height:7.1px;background:#4b4b4b;"></div>
<div class="a" style="left:281.5px;top:384.3px;width:402.5px;height:8px;background:#313131;"></div>
<div class="a" style="left:281.5px;top:384.3px;width:402.5px;height:0.9px;background:#262626;"></div>
<div class="a" style="left:379.5px;top:385.2px;width:8px;height:7.1px;background:#4b4b4b;"></div>
<div class="a" style="left:281.5px;top:392.3px;width:402.5px;height:8px;background:#313131;"></div>
<div class="a" style="left:281.5px;top:392.3px;width:402.5px;height:0.9px;background:#262626;"></div>
<div class="a" style="left:379.5px;top:393.2px;width:8px;height:7.1px;background:#4b4b4b;"></div>
<div class="a" style="left:281.5px;top:400.3px;width:402.5px;height:8px;background:#313131;"></div>
<div class="a" style="left:281.5px;top:400.3px;width:402.5px;height:0.9px;background:#262626;"></div>
<div class="a" style="left:379.5px;top:401.2px;width:8px;height:7.1px;background:#4b4b4b;"></div>
<div class="a" style="left:281.5px;top:408.3px;width:402.5px;height:8px;background:#313131;"></div>
<div class="a" style="left:281.5px;top:408.3px;width:402.5px;height:0.9px;background:#262626;"></div>
<div class="a" style="left:379.5px;top:409.2px;width:8px;height:7.1px;background:#4b4b4b;"></div>
<div class="a" style="left:281.5px;top:416.3px;width:402.5px;height:0.9px;background:#262626;"></div>
<div class="a" style="left:281.5px;top:424.2px;width:402.5px;height:7.8px;background:#2e2e2e;"></div>
<div class="a" style="left:379.5px;top:424.2px;width:8px;height:7.8px;background:#444;"></div>
<div class="a" style="left:281.5px;top:344.4px;width:98px;height:7.8px;background:#808584;"></div>
<div class="a" style="left:379.5px;top:344.4px;width:304.5px;height:7.8px;background:#afcbc6;"></div>
<div class="a" style="left:379.5px;top:344.4px;width:304.5px;height:1px;background:#c6dcd8;"></div>
<div class="a" style="left:281.5px;top:416.8px;width:402.5px;height:7.4px;background:#8a9795;"></div>
<div class="a" style="left:379.5px;top:416.8px;width:8px;height:7.4px;background:#95a3a0;"></div>
<div class="a" style="left:281.5px;top:344.4px;width:3px;height:88px;background:#3c3c3c;opacity:.35"></div>
<div class="a" style="left:516.5px;top:363.2px;width:2.4px;height:2.4px;background:#d0d0d0;transform:rotate(45deg)"></div>
<div class="a" style="left:379.15px;top:333px;width:0.9px;height:99px;background:#3f80d4;"></div>
<svg class="a" style="left:376px;top:327.5px" width="8" height="8" viewBox="0 0 8 8"><path d="M1 .8 H6.6 V4 L3.8 7.2 L1 4 Z" fill="#3f86de" stroke="#8cc0ff" stroke-width=".7"/></svg>
<div class="a" style="left:379px;top:354.1px;width:1.1px;height:5.2px;background:#d0d6e0;"></div>
<div class="a" style="left:378.2px;top:353.90000000000003px;width:2.7px;height:0.8px;background:#d0d6e0;"></div>
<div class="a" style="left:378.2px;top:358.7px;width:2.7px;height:0.8px;background:#d0d6e0;"></div>
<div class="t " style="left:377.6px;top:360.6px;font-size:5.5px;color:#d0d6e0">{</div>
<div class="a" style="left:379px;top:370.1px;width:1.1px;height:5.2px;background:#d0d6e0;"></div>
<div class="a" style="left:378.2px;top:369.90000000000003px;width:2.7px;height:0.8px;background:#d0d6e0;"></div>
<div class="a" style="left:378.2px;top:374.7px;width:2.7px;height:0.8px;background:#d0d6e0;"></div>
<div class="a" style="left:379px;top:378.1px;width:1.1px;height:5.2px;background:#d0d6e0;"></div>
<div class="a" style="left:378.2px;top:377.90000000000003px;width:2.7px;height:0.8px;background:#d0d6e0;"></div>
<div class="a" style="left:378.2px;top:382.7px;width:2.7px;height:0.8px;background:#d0d6e0;"></div>
<div class="a" style="left:379px;top:386.1px;width:1.1px;height:5.2px;background:#d0d6e0;"></div>
<div class="a" style="left:378.2px;top:385.90000000000003px;width:2.7px;height:0.8px;background:#d0d6e0;"></div>
<div class="a" style="left:378.2px;top:390.7px;width:2.7px;height:0.8px;background:#d0d6e0;"></div>
<div class="a" style="left:379px;top:394.1px;width:1.1px;height:5.2px;background:#d0d6e0;"></div>
<div class="a" style="left:378.2px;top:393.90000000000003px;width:2.7px;height:0.8px;background:#d0d6e0;"></div>
<div class="a" style="left:378.2px;top:398.7px;width:2.7px;height:0.8px;background:#d0d6e0;"></div>
<div class="a" style="left:379px;top:402.1px;width:1.1px;height:5.2px;background:#d0d6e0;"></div>
<div class="a" style="left:378.2px;top:401.90000000000003px;width:2.7px;height:0.8px;background:#d0d6e0;"></div>
<div class="a" style="left:378.2px;top:406.7px;width:2.7px;height:0.8px;background:#d0d6e0;"></div>
<div class="a" style="left:379px;top:410.1px;width:1.1px;height:5.2px;background:#d0d6e0;"></div>
<div class="a" style="left:378.2px;top:409.90000000000003px;width:2.7px;height:0.8px;background:#d0d6e0;"></div>
<div class="a" style="left:378.2px;top:414.7px;width:2.7px;height:0.8px;background:#d0d6e0;"></div>
<div class="a" style="left:272px;top:344.5px;width:9px;height:7.4px;background:#3a3a3a;"></div>
<div class="a" style="left:272px;top:416.5px;width:9px;height:7.4px;background:#333;"></div>
<div class="a" style="left:685.5px;top:337px;width:5px;height:4px;background:#ddd;border-radius:0 0 2px 2px"></div>
<div class="a" style="left:685.5px;top:345.5px;width:5px;height:5px;background:#ccc;border-radius:50%"></div>
<div class="a" style="left:687px;top:347px;width:2px;height:2px;background:#333;"></div>
<div class="a" style="left:684px;top:335px;width:8px;height:97px;background:#2a2a2a;z-index:-1"></div>
</div></body></html>
